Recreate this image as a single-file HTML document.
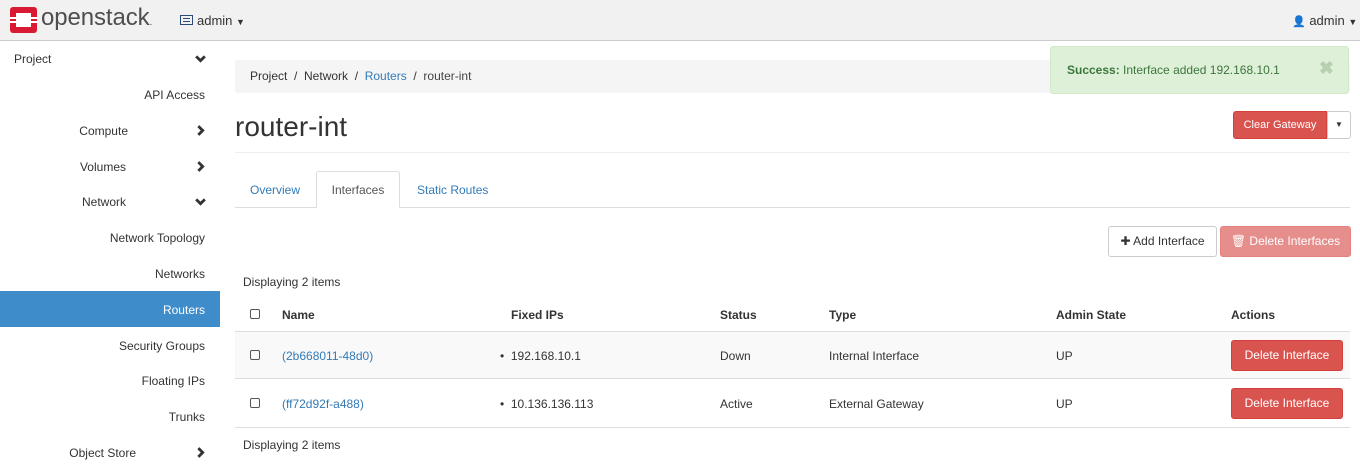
<!DOCTYPE html>
<html><head><meta charset="utf-8"><style>
*{box-sizing:border-box}
body{margin:0;width:1360px;height:470px;overflow:hidden;font-family:"Liberation Sans",sans-serif;font-size:12px;color:#333;background:#fff;position:relative}
.hdr{position:absolute;left:0;top:0;width:1360px;height:41px;background:#f1f1f1;border-bottom:1px solid #ccc}
.abs{position:absolute}
.side{position:absolute;left:0;top:41px;width:220px}
.si{position:absolute;right:15px;font-size:12px;color:#333;white-space:nowrap}
.chev{position:absolute;left:194px;width:13px;height:13px}
a{color:#337ab7;text-decoration:none}
.btnr{position:absolute;background:#d9534f;color:#fff;border:1px solid #d43f3a;border-radius:3px;text-align:center}
</style></head><body>
<div class="hdr">
 <svg class="abs" style="left:10px;top:7px" width="27" height="26" viewBox="0 0 27 26"><rect width="27" height="26" rx="3" fill="#da1a32"/><rect x="6" y="6" width="15" height="14" fill="#fff"/><rect x="0" y="10" width="6" height="2" fill="#fff"/><rect x="0" y="14" width="6" height="2" fill="#fff"/><rect x="21" y="10" width="6" height="2" fill="#fff"/><rect x="21" y="14" width="6" height="2" fill="#fff"/></svg>
 <div class="abs" style="left:41px;top:4px;font-size:24px;color:#4e4e4e;letter-spacing:-0.1px">openstack<span style="font-size:10px">.</span></div>
 <svg class="abs" style="left:180px;top:15px" width="13" height="10"><rect x=".5" y=".5" width="12" height="9" fill="none" stroke="#2a4a7a"/><rect x="3" y="3" width="7" height="1" fill="#2a4a7a"/><rect x="3" y="6" width="7" height="1" fill="#2a4a7a"/></svg>
 <div class="abs" style="left:197px;top:13px;font-size:13px">admin <span style="font-size:9px">▼</span></div>
 <div class="abs" style="left:1292px;top:13px;font-size:13px"><span style="font-size:11px">👤</span> admin <span style="font-size:9px">▼</span></div>
</div>
<div class="side">
 <div class="abs" style="left:14px;top:11px">Project</div><svg class="chev" style="top:11px" viewBox="0 0 12 12"><path d="M2 4l4 4 4-4" stroke="#333" stroke-width="2.6" fill="none"/></svg>
 <div class="si" style="top:47px">API Access</div>
 <div class="si" style="top:83px;right:92px">Compute</div><svg class="chev" style="top:83px" viewBox="0 0 12 12"><path d="M4 2l4 4-4 4" stroke="#333" stroke-width="2.6" fill="none"/></svg>
 <div class="si" style="top:119px;right:94px">Volumes</div><svg class="chev" style="top:119px" viewBox="0 0 12 12"><path d="M4 2l4 4-4 4" stroke="#333" stroke-width="2.6" fill="none"/></svg>
 <div class="si" style="top:154px;right:94px">Network</div><svg class="chev" style="top:154px" viewBox="0 0 12 12"><path d="M2 4l4 4 4-4" stroke="#333" stroke-width="2.6" fill="none"/></svg>
 <div class="si" style="top:190px">Network Topology</div>
 <div class="si" style="top:226px">Networks</div>
 <div class="abs" style="left:0;top:250px;width:220px;height:36px;background:#3f8ccb"></div>
 <div class="si" style="top:262px;color:#fff">Routers</div>
 <div class="si" style="top:298px">Security Groups</div>
 <div class="si" style="top:333px">Floating IPs</div>
 <div class="si" style="top:369px">Trunks</div>
 <div class="si" style="top:405px;right:84px">Object Store</div><svg class="chev" style="top:405px" viewBox="0 0 12 12"><path d="M4 2l4 4-4 4" stroke="#333" stroke-width="2.6" fill="none"/></svg>
</div>
<div class="abs" style="left:235px;top:60px;width:1115px;height:33px;background:#f5f5f5;border-radius:3px;padding:9px 15px">Project&nbsp; /&nbsp; Network&nbsp; /&nbsp; <a>Routers</a>&nbsp; /&nbsp; <span style="color:#444">router-int</span></div>
<div class="abs" style="left:1050px;top:46px;width:299px;height:48px;background:#dff0d8;border:1px solid #d0e9c6;border-radius:3px;color:#3c763d;padding:16px 16px"><b>Success:</b> Interface added 192.168.10.1<span style="position:absolute;right:14px;top:11px;font-size:18px;font-weight:bold;color:#b8cfb0">✖</span></div>
<div class="abs" style="left:235px;top:111px;font-size:28px;color:#333">router-int</div>
<div class="btnr" style="left:1233px;top:111px;width:94px;height:28px;line-height:26px;border-radius:3px 0 0 3px;font-size:11px">Clear Gateway</div>
<div class="abs" style="left:1327px;top:111px;width:24px;height:28px;border:1px solid #ccc;border-radius:0 3px 3px 0;text-align:center;line-height:26px;font-size:8px">▼</div>
<div class="abs" style="left:235px;top:152px;width:1115px;height:1px;background:#eee"></div>
<div class="abs" style="left:235px;top:207px;width:1115px;height:1px;background:#ddd"></div>
<div class="abs" style="left:250px;top:183px;color:#337ab7">Overview</div>
<div class="abs" style="left:316px;top:171px;width:84px;height:37px;background:#fff;border:1px solid #ddd;border-bottom-color:#fff;border-radius:3px 3px 0 0;text-align:center;padding-top:11px;color:#555">Interfaces</div>
<div class="abs" style="left:417px;top:183px;color:#337ab7">Static Routes</div>
<div class="abs" style="left:1108px;top:226px;width:109px;height:31px;border:1px solid #ccc;border-radius:3px;text-align:center;line-height:29px">✚ Add Interface</div>
<div class="btnr" style="left:1220px;top:226px;width:131px;height:31px;line-height:29px;opacity:.65">🗑 Delete Interfaces</div>
<div class="abs" style="left:243px;top:275px">Displaying 2 items</div>
<div class="abs" style="left:235px;top:331px;width:1115px;height:1px;background:#ddd"></div>
<div class="abs" style="left:235px;top:332px;width:1115px;height:47px;background:#f9f9f9;border-bottom:1px solid #ddd"></div>
<div class="abs" style="left:235px;top:427px;width:1115px;height:1px;background:#ddd"></div>
<div class="abs" style="top:308px;left:0;width:1360px;font-weight:bold">
 <span class="abs" style="left:250px;top:1px;width:10px;height:10px;border:1px solid #555;border-radius:2px"></span>
 <span class="abs" style="left:282px">Name</span><span class="abs" style="left:511px">Fixed IPs</span><span class="abs" style="left:720px">Status</span><span class="abs" style="left:829px">Type</span><span class="abs" style="left:1056px">Admin State</span><span class="abs" style="left:1231px">Actions</span>
</div>
<div class="abs" style="top:349px;left:0;width:1360px">
 <span class="abs" style="left:250px;top:1px;width:10px;height:10px;border:1px solid #555;border-radius:2px"></span>
 <a class="abs" style="left:282px">(2b668011-48d0)</a><span class="abs" style="left:500px">•&nbsp; 192.168.10.1</span><span class="abs" style="left:720px">Down</span><span class="abs" style="left:829px">Internal Interface</span><span class="abs" style="left:1056px">UP</span>
</div>
<div class="btnr" style="left:1231px;top:340px;width:112px;height:31px;line-height:29px">Delete Interface</div>
<div class="abs" style="top:397px;left:0;width:1360px">
 <span class="abs" style="left:250px;top:1px;width:10px;height:10px;border:1px solid #555;border-radius:2px"></span>
 <a class="abs" style="left:282px">(ff72d92f-a488)</a><span class="abs" style="left:500px">•&nbsp; 10.136.136.113</span><span class="abs" style="left:720px">Active</span><span class="abs" style="left:829px">External Gateway</span><span class="abs" style="left:1056px">UP</span>
</div>
<div class="btnr" style="left:1231px;top:388px;width:112px;height:31px;line-height:29px">Delete Interface</div>
<div class="abs" style="left:243px;top:438px">Displaying 2 items</div>
</body></html>
